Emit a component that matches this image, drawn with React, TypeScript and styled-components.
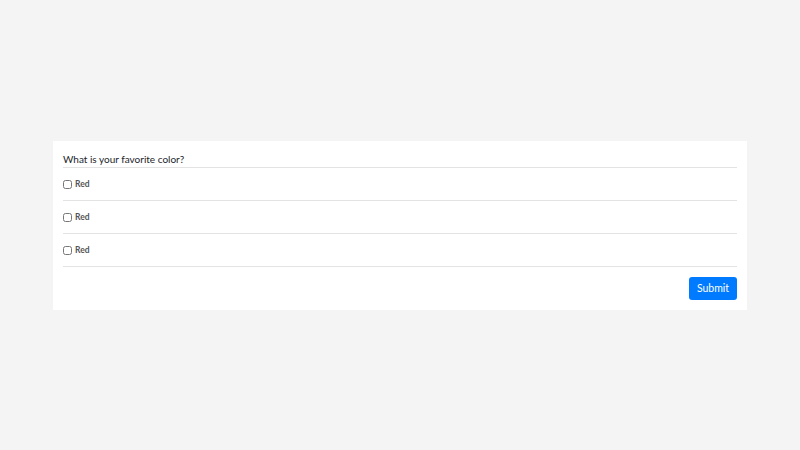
import styled, { createGlobalStyle } from 'styled-components'
import { ReactElement } from 'react'

const GlobalStyle = createGlobalStyle`
  html, body {
    margin: 0;
    padding: 0;
    background: #f4f4f4;
    font-family: Lato, "Open Sans", "Liberation Sans", sans-serif;
  }
`

const Page = styled.div`
  width: 800px;
  height: 450px;
  display: flex;
  align-items: center;
  justify-content: center;
`

const Card = styled.form`
  width: 694px;
  box-sizing: border-box;
  background: #ffffff;
  padding: 10px;
  display: flex;
  flex-direction: column;
`

const Question = styled.div`
  font-size: 10px;
  line-height: 16px;
  color: #212529;
  border-bottom: 1px solid #e3e3e3;
`

const OptionRow = styled.label`
  height: 32px;
  display: flex;
  align-items: center;
  gap: 2px;
  border-bottom: 1px solid #e3e3e3;
  font-size: 8.5px;
  font-weight: 700;
  color: #555;
`

const Box = styled.input`
  width: 9px;
  height: 9px;
  margin: 1px 1px 0 0;
`

const Footer = styled.div`
  display: flex;
  justify-content: flex-end;
  padding-top: 10px;
`

const SubmitButton = styled.button`
  width: 48px;
  height: 23px;
  border: none;
  border-radius: 3px;
  background: #007bff;
  color: #ffffff;
  font-family: inherit;
  font-size: 10.5px;
  padding: 0;
`

const options = ['Red', 'Red', 'Red']

const App = (): ReactElement => {
  return (
    <>
      <GlobalStyle />
      <Page>
        <Card onSubmit={(e) => e.preventDefault()}>
          <Question>What is your favorite color?</Question>
          {options.map((opt, i) => (
            <OptionRow key={i}>
              <Box type="checkbox" value={opt} />
              {opt}
            </OptionRow>
          ))}
          <Footer>
            <SubmitButton type="submit">Submit</SubmitButton>
          </Footer>
        </Card>
      </Page>
    </>
  )
}

export default App
